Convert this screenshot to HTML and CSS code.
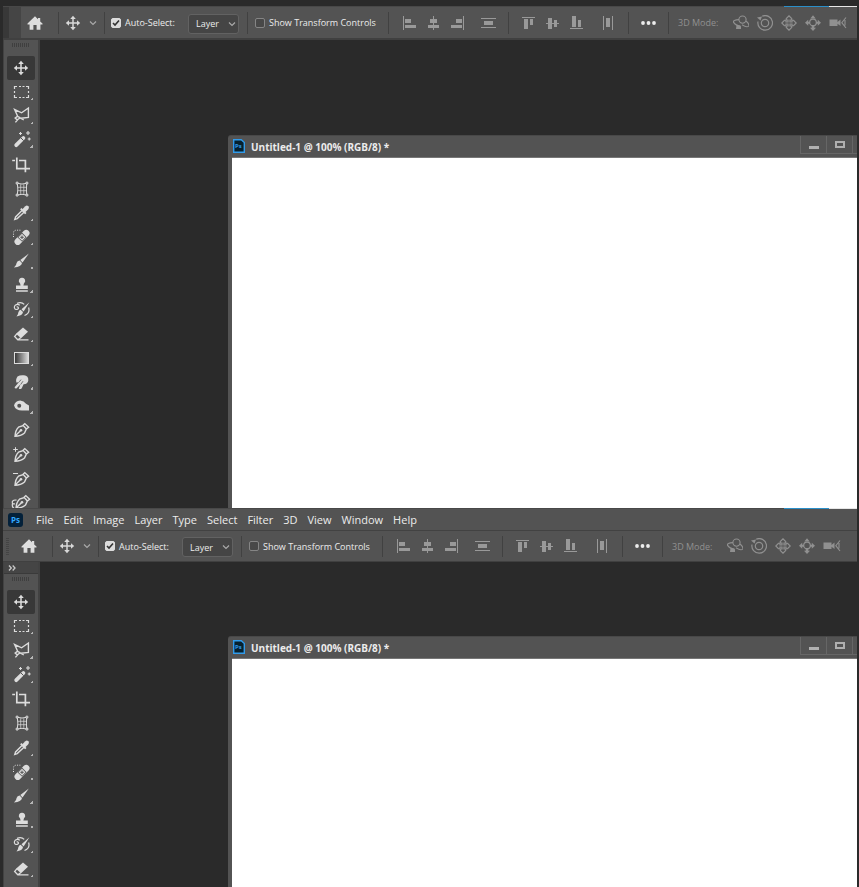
FILE: index.html
```html
<!DOCTYPE html>
<html lang="en">
<head>
<meta charset="utf-8">
<title>Untitled-1</title>
<link rel="stylesheet" href="styles.css">
</head>
<body>
<svg class="defs" aria-hidden="true">
  <symbol id="home" viewBox="0 0 16 16"><path fill="currentColor" d="M8 1.2 L.5 8.6 V9.4 H2.6 V14.8 H6.4 V10 H9.6 V14.8 H13.4 V9.4 H15.5 V8.6 L13.2 6.4 V3 H11 V4.2Z"/></symbol>
  <symbol id="move" viewBox="0 0 20 20"><path d="M10 5V15M5 10H15" stroke="currentColor" stroke-width="1.5"/><path fill="currentColor" d="M10 2.8l2.8 3.2H7.2zM10 17.2l2.8-3.2H7.2zM2.8 10l3.2-2.8v5.6zM17.2 10l-3.2-2.8v5.6z"/></symbol>
  <symbol id="marquee" viewBox="0 0 20 20"><path fill="none" stroke="currentColor" stroke-width="1.2" d="M3.5 7V4.5H6M8 4.5h2M11.5 4.5h2M15 4.5h2.5V7M17.5 9v2M17.5 13v2.5H15M13.5 15.5h-2M10 15.5H8M6 15.5H3.5V13M3.5 11V9"/></symbol>
  <symbol id="lasso" viewBox="0 0 20 20"><path fill="none" stroke="currentColor" stroke-width="1.4" d="M7 11 3.6 3.5 10.6 6.8 17.4 2V11.4L10 12.2M9.5 11.8 6.4 10.4 4.2 12 6.2 13.8 9 12 12.8 14M6.8 13.6 4.4 16.4"/></symbol>
  <symbol id="wand" viewBox="0 0 20 20"><path stroke="currentColor" stroke-width="3.8" stroke-linecap="round" d="M5.2 15.2 12.4 8"/><path stroke="#535353" d="M9.8 7.8l2.8 2.8"/><path stroke="currentColor" stroke-width="1.1" d="M9.5 2v3M8 3.5h3M17 1v4M15 3h4M18.2 7.5v3M16.7 9h3"/></symbol>
  <symbol id="crop" viewBox="0 0 20 20"><path fill="none" stroke="currentColor" stroke-width="1.7" d="M1.2 5.5H4M5.8 2.5V13.7H19M8 5.5H14.4V17.3"/></symbol>
  <symbol id="warp" viewBox="0 0 20 20"><path fill="none" stroke="currentColor" stroke-width="1" d="M6.3 4.3Q11 5.8 15.7 4.3Q15.2 10 15.7 16Q11 14.6 6.3 16Q7.4 10 6.3 4.3"/><path fill="none" stroke="currentColor" stroke-width=".7" d="M9.7 5.3v9.6M12.8 5.3v9.6M7 8.3h8.5M7 11.7h8.5"/><path fill="#535353" stroke="currentColor" d="M5.2 3.2h1.8v1.8h-1.8zM15 3.2h1.8v1.8H15zM5.2 15.2h1.8v1.8h-1.8zM15 15.2h1.8v1.8H15z"/></symbol>
  <symbol id="dropper" viewBox="0 0 20 20"><path fill="none" stroke="currentColor" stroke-width="1.4" d="M11 7.6 4.6 14 3.8 16.4 6.2 15.6 13 9.2"/><path stroke="currentColor" stroke-width="4.2" stroke-linecap="round" d="M13.3 7.2 15.8 4.7"/><path stroke="currentColor" stroke-width="2" d="M9.8 5.6 14.8 10.6"/></symbol>
  <symbol id="heal" viewBox="0 0 20 20"><path stroke="currentColor" stroke-width="6.6" stroke-linecap="round" d="M6.8 14.6 15.2 6.2"/><path fill="#535353" d="M11 5.6 15.6 10.2 11.2 14.8 6.4 10.2z"/><path fill="currentColor" d="M11 6.7 14.5 10.2 11.1 13.7 7.5 10.2z"/><path stroke="#535353" d="M9.3 10.3h3.4M11 8.6v3.4"/><path fill="none" stroke="currentColor" stroke-dasharray="1 1.3" d="M2.5 10V6Q2.5 3.5 5 3.2H9.5"/></symbol>
  <symbol id="brush" viewBox="0 0 20 20"><path fill="currentColor" d="M17.8 2.6 9.3 9 11.5 11.4zM8.6 9.6 11 12.1Q10.5 16 3 16.4Q5.4 14.8 5.6 12Q6.2 9.8 8.6 9.6z"/></symbol>
  <symbol id="stamp" viewBox="0 0 20 20"><path fill="currentColor" d="M11 2.8a3 3 0 0 1 2 5.4L12.4 10.5H16.8V14H5V10.5H9.6L9 8.2A3 3 0 0 1 11 2.8zM5 15.2h11.8v1.5H5z"/></symbol>
  <symbol id="history" viewBox="0 0 20 20"><path fill="currentColor" d="M18.4 2.2 10.5 9.2 12.6 11.5zM9.6 9.8 12 12.1Q11.5 15.8 5.5 16.4Q7.4 14 7.3 12.4Q8 10.1 9.6 9.8z"/><path fill="none" stroke="currentColor" stroke-width="1.2" d="M8.8 5.2Q6.5 3.6 4.3 5.2Q2.6 7 4 9Q6.5 10.3 7.5 8.2Q7.2 6.3 5.6 7M17.6 7.5Q19.4 13.3 13.5 15.5M6 3.2Q10.8 1.7 13.2 4.4"/></symbol>
  <symbol id="eraser" viewBox="0 0 20 20"><path fill="currentColor" d="M12 3.4 17 7.8 10 14.2 5 9.8z"/><path fill="none" stroke="currentColor" stroke-width="1.3" d="M5.8 9.8 3.6 12.5 6.8 15.8H17.5M7.2 15.6 10 13.5"/></symbol>
  <linearGradient id="ramp"><stop offset="0" stop-color="#333"/><stop offset="1" stop-color="#ddd"/></linearGradient>
  <symbol id="gradient" viewBox="0 0 20 20"><rect x="3.5" y="4.5" width="14" height="11" fill="url(#ramp)" stroke="currentColor"/></symbol>
  <symbol id="smudge" viewBox="0 0 20 20"><path fill="currentColor" d="M6.5 4.6Q9 2.8 13 3.3Q17.6 3.6 17.3 8.5Q16.8 12 12.6 12.2L10.6 16.6Q8.6 17.6 7.8 16.6L9.4 12.4 5.4 16.6Q3.6 16.8 3.6 15.2L8.2 9.8 5.6 10.8Q4.2 8.2 6.5 4.6z"/><path stroke="#535353" stroke-width=".8" d="M9.7 12.5 12 9.2M8.3 9.8 10 7.6"/></symbol>
  <symbol id="sponge" viewBox="0 0 20 20"><path fill="currentColor" fill-rule="evenodd" d="M3 9.5Q4 5 9.2 4.6Q13 5.2 15 7.8L18 9.4V14.6H11Q4.5 14.5 3 9.5zM8.2 7.8a2 2 0 1 0 .1 4a2 2 0 0 0-.1-4z"/></symbol>
  <symbol id="pen" viewBox="0 0 20 20"><path fill="none" stroke="currentColor" stroke-width="1.4" d="M4 16.3Q4.4 10 7.5 7.2L12.2 5.6 15.4 8.9 13.5 13Q10 16 4 16.3zM4 16 9.5 10.8M12 5.3 13.8 3.6 17.6 7.3 15.5 9"/><circle cx="10" cy="10.3" r="1.3" fill="currentColor"/></symbol>
  <symbol id="pen-add" viewBox="0 0 20 20"><use href="#pen" width="20" height="20"/><path stroke="currentColor" d="M2.2 4.5h4.6M4.5 2.2v4.6"/></symbol>
  <symbol id="pen-del" viewBox="0 0 20 20"><use href="#pen" width="20" height="20"/><path stroke="currentColor" d="M2 4.5h5"/></symbol>
  <symbol id="pen-curve" viewBox="0 0 20 20"><use href="#pen" x="1" y="-1" width="20" height="20"/><path fill="none" stroke="currentColor" stroke-width="1.2" d="M5.5 7.2Q2 6.4 1.2 9Q1.4 11.5 4 10.7M1.5 10.5Q.5 15 4.5 16"/></symbol>
  <symbol id="chevron" viewBox="0 0 8 8"><path fill="none" stroke="currentColor" stroke-width="1.2" d="M1 2.5 4 5.5 7 2.5"/></symbol>
  <symbol id="al-left" viewBox="0 0 16 16"><path fill="currentColor" d="M2 1h1v14H2zM4 4h6v4H4zM4 10h11v3H4z"/></symbol>
  <symbol id="al-center" viewBox="0 0 16 16"><path fill="currentColor" d="M8 1h1v14H8zM5 4h7v4H5zM3 10h11v3H3z"/></symbol>
  <symbol id="al-right" viewBox="0 0 16 16"><path fill="currentColor" d="M14 1h1v14h-1zM7 4h6v4H7zM2 10h11v3H2z"/></symbol>
  <symbol id="dist-v" viewBox="0 0 16 16"><path fill="currentColor" d="M1 3h15v1H1zM4 6h9v4H4zM1 12h15v1H1z"/></symbol>
  <symbol id="al-top" viewBox="0 0 16 16"><path fill="currentColor" d="M2 2h13v1H2zM4 4h4v10H4zM10 4h3v6h-3z"/></symbol>
  <symbol id="al-mid" viewBox="0 0 16 16"><path fill="currentColor" d="M2 8h13v1H2zM4 3h4v11H4zM10 5h3v7h-3z"/></symbol>
  <symbol id="al-bot" viewBox="0 0 16 16"><path fill="currentColor" d="M2 13h13v1H2zM4 1h4v11H4zM10 5h3v7h-3z"/></symbol>
  <symbol id="dist-h" viewBox="0 0 16 16"><path fill="currentColor" d="M4 1h1v14H4zM7 3h4v9H7zM13 1h1v14h-1z"/></symbol>
  <symbol id="more" viewBox="0 0 16 16"><g fill="currentColor"><circle cx="3" cy="8" r="1.9"/><circle cx="8.5" cy="8" r="1.9"/><circle cx="14" cy="8" r="1.9"/></g></symbol>
  <symbol id="orbit" viewBox="0 0 16 16"><g fill="none" stroke="currentColor" stroke-width="1.1"><circle cx="9.5" cy="4.6" r="3.6"/><path d="M6 4.6Q-.4 4.8 .6 7.4Q2.5 10.5 7.5 11M13 6Q16.5 8.6 15.7 11Q14 13 9 9.8"/></g><path fill="currentColor" d="M3.5 10 8 11.2V14H3z"/></symbol>
  <symbol id="roll" viewBox="0 0 16 16"><g fill="none" stroke="currentColor" stroke-width="1.2"><circle cx="8" cy="8" r="3.7"/><path d="M5.2 1.2A7.3 7.3 0 1 1 1 6.5"/></g><path fill="currentColor" d="M0 2.5 5 1.5 3.5 5.5z"/></symbol>
  <symbol id="pan" viewBox="0 0 16 16"><path fill="none" stroke="currentColor" stroke-width="1.2" d="M7 7V5H6Q5 4.8 5.3 3.5L8 .8 10.7 3.5Q11 4.8 10 5H9V7H11V6Q11.2 5 12.5 5.3L15.2 8 12.5 10.7Q11.2 11 11 10V9H9V11H10Q11 11.2 10.7 12.5L8 15.2 5.3 12.5Q5 11.2 6 11H7V9H5V10Q4.8 11 3.5 10.7L.8 8 3.5 5.3Q4.8 5 5 6V7z"/></symbol>
  <symbol id="slide" viewBox="0 0 16 16"><circle cx="8" cy="7.5" r="3.3" fill="none" stroke="currentColor" stroke-width="1.2"/><path fill="currentColor" d="M8 .2l2.7 3.3H5.3zM8 16l-3-3.2h1.7V10h2.6v2.8H11zM0 7.8l3.2-3v2H5v2H3.2v2zM16 7.8l-3.2-3v2H11v2h1.8v2z"/></symbol>
  <symbol id="camera" viewBox="0 0 18 16"><path fill="currentColor" d="M.5 4.5H8.5v6.5H.5zM8.5 7l3-2.5V11l-3-2.3z"/><path fill="none" stroke="currentColor" stroke-width="1.1" d="M17 2.5 12.8 7.7 17 13M16 5v5.5"/></symbol>
  <symbol id="psdoc" viewBox="0 0 12 14"><path fill="#06202e" stroke="#319bea" stroke-width="1.4" d="M.7.7H8.3L11.3 3.5V13.3H.7z"/></symbol>
</svg>

<section class="screen screen-a">
  <div class="edge"></div>
  <header class="options options-a">
    <span class="grip"></span>
    <button class="cell home" aria-label="Home"><svg><use href="#home"/></svg></button>
    <button class="cell move" aria-label="Move tool"><svg class="m"><use href="#move"/></svg><svg class="chev"><use href="#chevron"/></svg></button>
    <div class="cell auto"><label><input type="checkbox" checked>Auto-Select:</label><span class="pick"><select aria-label="Auto-select target"><option>Layer</option></select><svg class="chev"><use href="#chevron"/></svg></span></div>
    <div class="cell show"><label><input type="checkbox">Show Transform Controls</label></div>
    <div class="cell alignh"><svg><use href="#al-left"/></svg><svg><use href="#al-center"/></svg><svg><use href="#al-right"/></svg><svg class="far"><use href="#dist-v"/></svg></div>
    <div class="cell alignv"><svg><use href="#al-top"/></svg><svg><use href="#al-mid"/></svg><svg><use href="#al-bot"/></svg><svg class="far"><use href="#dist-h"/></svg></div>
    <button class="cell more" aria-label="More"><svg><use href="#more"/></svg></button>
    <div class="cell mode"><span>3D Mode:</span><svg><use href="#orbit"/></svg><svg><use href="#roll"/></svg><svg><use href="#pan"/></svg><svg><use href="#slide"/></svg><svg class="cam"><use href="#camera"/></svg></div>
  </header>
  <div class="work">
    <aside class="panel">
      <span class="dots"></span>
      <div class="tools">
        <button class="on" aria-label="Move"><svg><use href="#move"/></svg></button>
        <button class="sub" aria-label="Marquee"><svg><use href="#marquee"/></svg></button>
        <button class="sub" aria-label="Lasso"><svg><use href="#lasso"/></svg></button>
        <button class="sub" aria-label="Magic wand"><svg><use href="#wand"/></svg></button>
        <button aria-label="Crop"><svg><use href="#crop"/></svg></button>
        <button aria-label="Perspective warp"><svg><use href="#warp"/></svg></button>
        <button class="sub" aria-label="Eyedropper"><svg><use href="#dropper"/></svg></button>
        <button class="sub" aria-label="Healing brush"><svg><use href="#heal"/></svg></button>
        <button class="sub" aria-label="Brush"><svg><use href="#brush"/></svg></button>
        <button class="sub" aria-label="Clone stamp"><svg><use href="#stamp"/></svg></button>
        <button class="sub" aria-label="History brush"><svg><use href="#history"/></svg></button>
        <button class="sub" aria-label="Eraser"><svg><use href="#eraser"/></svg></button>
        <button class="sub" aria-label="Gradient"><svg><use href="#gradient"/></svg></button>
        <button class="sub" aria-label="Smudge"><svg><use href="#smudge"/></svg></button>
        <button class="sub" aria-label="Sponge"><svg><use href="#sponge"/></svg></button>
        <button aria-label="Pen"><svg><use href="#pen"/></svg></button>
        <button aria-label="Add anchor"><svg><use href="#pen-add"/></svg></button>
        <button aria-label="Delete anchor"><svg><use href="#pen-del"/></svg></button>
        <button aria-label="Curvature pen"><svg><use href="#pen-curve"/></svg></button>
      </div>
    </aside>
    <main class="doc">
      <div class="title"><span class="badge"><svg><use href="#psdoc"/></svg><i>Ps</i></span><h2>Untitled-1 @ 100% (RGB/8) *</h2><div class="wins"><button class="min" aria-label="Minimize"></button><button class="max" aria-label="Maximize"></button></div></div>
      <div class="canvas"></div>
    </main>
  </div>
</section>

<section class="screen screen-b">
  <div class="edge"></div>
  <nav class="menu"><span class="ps">Ps</span><a href="#">File</a><a href="#">Edit</a><a href="#">Image</a><a href="#">Layer</a><a href="#">Type</a><a href="#">Select</a><a href="#">Filter</a><a href="#">3D</a><a href="#">View</a><a href="#">Window</a><a href="#">Help</a></nav>
  <header class="options options-b">
    <span class="grip"></span>
    <button class="cell home" aria-label="Home"><svg><use href="#home"/></svg></button>
    <button class="cell move" aria-label="Move tool"><svg class="m"><use href="#move"/></svg><svg class="chev"><use href="#chevron"/></svg></button>
    <div class="cell auto"><label><input type="checkbox" checked>Auto-Select:</label><span class="pick"><select aria-label="Auto-select target"><option>Layer</option></select><svg class="chev"><use href="#chevron"/></svg></span></div>
    <div class="cell show"><label><input type="checkbox">Show Transform Controls</label></div>
    <div class="cell alignh"><svg><use href="#al-left"/></svg><svg><use href="#al-center"/></svg><svg><use href="#al-right"/></svg><svg class="far"><use href="#dist-v"/></svg></div>
    <div class="cell alignv"><svg><use href="#al-top"/></svg><svg><use href="#al-mid"/></svg><svg><use href="#al-bot"/></svg><svg class="far"><use href="#dist-h"/></svg></div>
    <button class="cell more" aria-label="More"><svg><use href="#more"/></svg></button>
    <div class="cell mode"><span>3D Mode:</span><svg><use href="#orbit"/></svg><svg><use href="#roll"/></svg><svg><use href="#pan"/></svg><svg><use href="#slide"/></svg><svg class="cam"><use href="#camera"/></svg></div>
  </header>
  <div class="work">
    <aside class="panel">
      <button class="expand" aria-label="Expand panel"><svg viewBox="0 0 8 8"><path fill="none" stroke="currentColor" stroke-width="1.3" d="M1 1.5 3.3 4 1 6.5M4.7 1.5 7 4 4.7 6.5"/></svg></button>
      <span class="dots"></span>
      <div class="tools">
        <button class="on" aria-label="Move"><svg><use href="#move"/></svg></button>
        <button class="sub" aria-label="Marquee"><svg><use href="#marquee"/></svg></button>
        <button class="sub" aria-label="Lasso"><svg><use href="#lasso"/></svg></button>
        <button class="sub" aria-label="Magic wand"><svg><use href="#wand"/></svg></button>
        <button aria-label="Crop"><svg><use href="#crop"/></svg></button>
        <button aria-label="Perspective warp"><svg><use href="#warp"/></svg></button>
        <button class="sub" aria-label="Eyedropper"><svg><use href="#dropper"/></svg></button>
        <button class="sub" aria-label="Healing brush"><svg><use href="#heal"/></svg></button>
        <button class="sub" aria-label="Brush"><svg><use href="#brush"/></svg></button>
        <button class="sub" aria-label="Clone stamp"><svg><use href="#stamp"/></svg></button>
        <button class="sub" aria-label="History brush"><svg><use href="#history"/></svg></button>
        <button class="sub" aria-label="Eraser"><svg><use href="#eraser"/></svg></button>
        <button class="sub" aria-label="Gradient"><svg><use href="#gradient"/></svg></button>
      </div>
    </aside>
    <main class="doc">
      <div class="title"><span class="badge"><svg><use href="#psdoc"/></svg><i>Ps</i></span><h2>Untitled-1 @ 100% (RGB/8) *</h2><div class="wins"><button class="min" aria-label="Minimize"></button><button class="max" aria-label="Maximize"></button></div></div>
      <div class="canvas"></div>
    </main>
  </div>
</section>
</body>
</html>
```
FILE: styles.css
```css
*, *::before, *::after { box-sizing: border-box; }
html, body { height: 100%; }
body {
  margin: 0;
  display: flex;
  flex-direction: column;
  overflow: hidden;
  background: #2a2a2a;
  color: #ececec;
  font-family: "Open Sans", "Noto Sans", sans-serif;
  font-size: 9px;
}
button {
  margin: 0;
  padding: 0;
  border: 0;
  background: none;
  color: inherit;
  font: inherit;
}
svg { display: block; flex: none; width: 16px; height: 16px; }
.defs { position: absolute; width: 0; height: 0; }

.screen {
  display: flex;
  flex-direction: column;
  min-height: 0;
  padding: 0 2px 0 3px;
  overflow: hidden;
}
.screen-a { flex: 508 0 0; }
.screen-b { flex: 379 0 0; }
.edge {
  flex: none;
  height: 1px;
  background: linear-gradient(to left, #e6e6e6 28px, #2b8fc9 28px 73px, #484848 73px);
}
.screen-a .edge { margin-top: 6px; }

/* Options bar */
.options {
  flex: none;
  display: flex;
  height: 31px;
  background: #535353;
  border-bottom: 1px solid #404040;
}
.grip { flex: none; width: 6px; }
.options-a { height: 33px; border-bottom-width: 2px; }
.options-a .grip {
  width: 18px;
  margin-right: -6px;
  background: #454545;
  border-left: 6px solid #383838;
}
.options-b .grip {
  height: 18px;
  margin: 7px 0 0 3px;
  width: 3px;
  background: repeating-linear-gradient(#444 0 1px, transparent 1px 2px);
}
.cell {
  position: relative;
  flex: none;
  display: flex;
  align-items: center;
}
.cell + .cell::before {
  content: "";
  position: absolute;
  left: 0;
  top: 5px;
  bottom: 4px;
  width: 1px;
  background: #414141;
}
.home { width: 43px; padding-left: 12px; }
.home svg { color: #dedede; }
.move { width: 46px; padding-left: 5px; }
.move .m { width: 20px; height: 20px; color: #d8d8d8; }
.chev { width: 8px; height: 8px; color: #a9a9a9; }
.move .chev { margin-left: 6px; }
.auto { width: 143px; padding: 0 8px 0 7px; justify-content: space-between; }
.show { width: 141px; padding-left: 8px; }
label { display: flex; align-items: center; gap: 4px; white-space: nowrap; }
input[type="checkbox"] {
  appearance: none;
  width: 10px;
  height: 10px;
  margin: 0;
  border: 1px solid #858585;
  border-radius: 2px;
  background: #484848;
}
input[type="checkbox"]:checked {
  border-color: #dcdcdc;
  background: #dcdcdc url("data:image/svg+xml,%3Csvg xmlns='http://www.w3.org/2000/svg' viewBox='0 0 8 8'%3E%3Cpath d='M1 4 3 6 7 1.5' fill='none' stroke='%23333' stroke-width='1.6'/%3E%3C/svg%3E");
}
.pick { display: flex; align-items: center; margin-top: 2px; }
select {
  appearance: none;
  width: 51px;
  height: 20px;
  padding: 0 0 0 7px;
  border: 1px solid #626262;
  border-radius: 3px;
  background: #454545;
  color: inherit;
  font: inherit;
}
.pick .chev { margin-left: -11px; margin-right: 3px; pointer-events: none; }
.alignh, .alignv { gap: 8px; color: #999; }
.alignh { width: 120px; padding-left: 13px; }
.alignv { width: 120px; padding-left: 12px; }
.alignh .far, .alignv .far { margin-left: 7px; }
.more { width: 40px; padding-left: 12px; }
.mode { flex: 1; min-width: 0; gap: 8px; padding-left: 10px; color: #909090; }
.mode span { width: 47px; white-space: nowrap; }
.mode .cam { width: 18px; }

/* Work area */
.work { flex: 1; min-height: 0; display: flex; align-items: stretch; }
.panel {
  flex: none;
  display: flex;
  flex-direction: column;
  width: 37px;
  background: #535353;
  border: solid #424242;
  border-width: 0 2px 0 1px;
}
.dots {
  flex: none;
  width: 18px;
  height: 4px;
  margin: 3px 0 9px 8px;
  background: repeating-linear-gradient(to right, #3f3f3f 0 1px, transparent 1px 2px);
}
.expand {
  flex: none;
  height: 12px;
  padding-left: 4px;
  background: #454545;
  border-bottom: 1px solid #3a3a3a;
}
.expand svg { width: 8px; height: 8px; color: #c8c8c8; }
.tools {
  flex: none;
  display: flex;
  flex-direction: column;
  justify-content: space-between;
  height: 459px;
  margin: 0 3px;
}
.screen-b .tools { height: 315px; }
.tools button {
  position: relative;
  display: flex;
  align-items: center;
  justify-content: center;
  width: 28px;
  height: 24px;
  color: #dcdcdc;
}
.tools svg { width: 20px; height: 20px; }
.tools .on { background: #383838; border-radius: 2px; }
.tools .sub::after {
  content: "";
  position: absolute;
  right: 2px;
  bottom: 4px;
  width: 3px;
  height: 3px;
  background: linear-gradient(135deg, transparent 50%, #b5b5b5 50%);
}

/* Document window */
.doc {
  flex: 1;
  min-width: 0;
  display: flex;
  flex-direction: column;
  margin: 95px 0 0 188px;
  padding-left: 4px;
  background: #535353;
  border-top: 1px solid #484848;
  border-radius: 3px 0 0 0;
}
.screen-b .doc { margin-top: 74px; }
.title { flex: none; display: flex; height: 22px; border-bottom: 1px solid #777; }
.title h2 {
  flex: 1;
  margin: 0;
  padding-left: 6px;
  font-size: 10px;
  line-height: 22px;
  font-weight: 700;
}
.badge { position: relative; width: 12px; margin: 3px 0 0 1px; }
.badge svg { width: 12px; height: 14px; }
.badge i {
  position: absolute;
  left: 2px;
  top: 3px;
  color: #319bea;
  font-style: normal;
  font-weight: 700;
  font-size: 6px;
  line-height: 8px;
}
.wins { display: flex; height: 18px; border: solid #666; border-width: 0 0 1px 1px; }
.wins button { width: 26px; display: flex; justify-content: center; align-items: center; border-right: 1px solid #666; }
.wins::after { content: ""; width: 4px; }
.min::after { content: ""; width: 10px; height: 3px; margin-top: 5px; background: #b0b0b0; }
.max::after { content: ""; width: 10px; height: 7px; border: 2px solid #b0b0b0; }
.canvas { flex: 1; background: #fff; }

/* Menu bar */
.menu {
  flex: none;
  display: flex;
  align-items: center;
  gap: 10px;
  height: 22px;
  padding-left: 5px;
  background: #535353;
  border-bottom: 1px solid #424242;
  font-size: 11px;
}
.menu a { color: inherit; text-decoration: none; }
.ps {
  width: 15px;
  height: 14px;
  margin-right: 3px;
  border-radius: 3px;
  background: #04213a;
  color: #31a8ff;
  font-size: 8px;
  font-weight: 700;
  line-height: 14px;
  text-align: center;
}
```
